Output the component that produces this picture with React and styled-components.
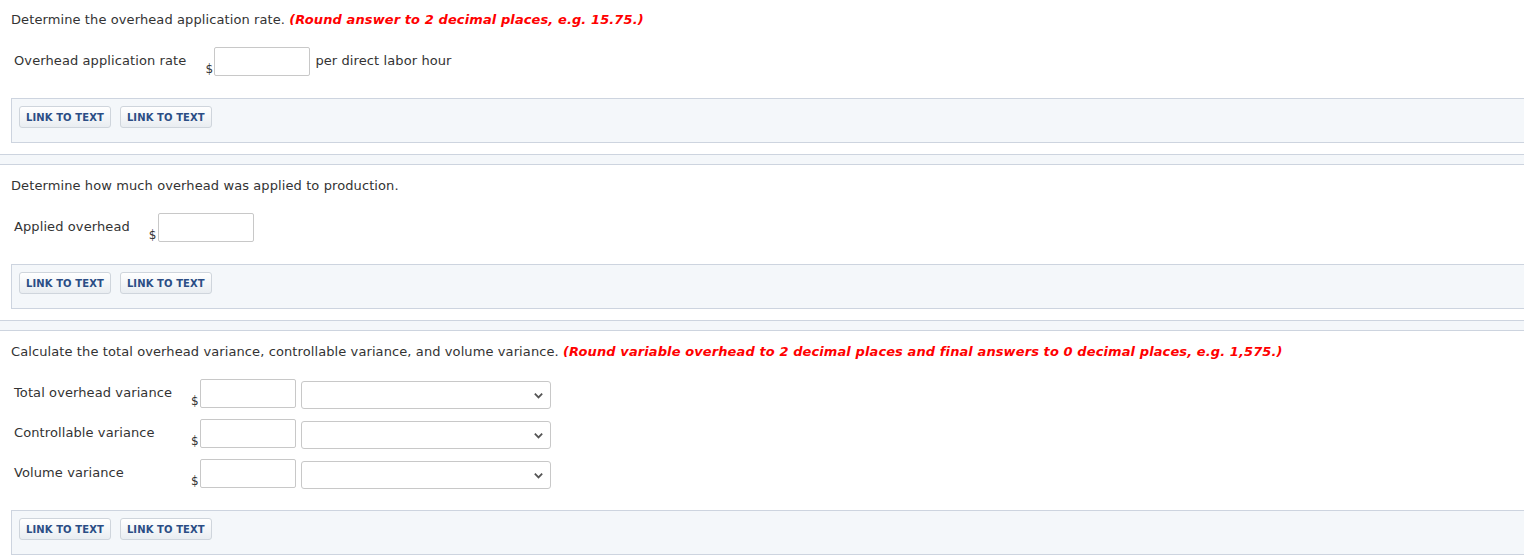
import React from "react"
import styled, { createGlobalStyle } from "styled-components"

const GlobalStyle = createGlobalStyle`
  body {
    margin: 0;
    background: #fff;
    font-family: "DejaVu Sans", Verdana, sans-serif;
    font-size: 13px;
    letter-spacing: 0.1px;
    color: #333;
    overflow: hidden;
  }
`

const Part = styled.section`
  padding: 12px 0 0 11px;
`

const Prompt = styled.p`
  margin: 0;
  line-height: 15px;
  .hint {
    color: #f00;
    font-weight: bold;
    font-style: italic;
  }
`

const Fields = styled.div`
  display: grid;
  grid-template-columns: auto auto auto 1fr;
  grid-auto-rows: 29px;
  row-gap: 11px;
  margin-top: 20px;
  align-items: start;
`

const Label = styled.div`
  padding: 6px 19px 0 3px;
  line-height: 16px;
  white-space: nowrap;
`

const Money = styled.div`
  display: flex;
  align-items: flex-end;
  span {
    font-size: 12px;
    line-height: 13px;
    margin-right: 1px;
    width: 8px;
  }
`

const Input = styled.input`
  box-sizing: border-box;
  width: 96px;
  height: 29px;
  margin: 0;
  border: 1px solid #c8c8c8;
  border-radius: 2px;
  background: #fff;
`

const After = styled.div`
  padding: 6px 0 0 5px;
  line-height: 16px;
`

const Select = styled.div`
  box-sizing: border-box;
  width: 250px;
  height: 28px;
  margin: 2px 0 0 5px;
  border: 1px solid #c8c8c8;
  border-radius: 3px;
  background: #fff;
  display: flex;
  align-items: center;
  justify-content: flex-end;
  padding-right: 6px;
  svg {
    width: 11px;
    height: 11px;
  }
`

const LinkBar = styled.div`
  margin-top: 22px;
  border: 1px solid #cdd4df;
  border-right: none;
  background: #f4f7fa;
  padding: 7px 7px 14px;
  display: flex;
  gap: 9px;
`

const LinkButton = styled.button`
  box-sizing: border-box;
  height: 22px;
  padding: 0 6px;
  border: 1px solid #cfd5dc;
  border-radius: 3px;
  background: linear-gradient(#ffffff, #e9edf1);
  color: #2b4d85;
  font-family: "DejaVu Sans", Verdana, sans-serif;
  font-size: 10px;
  font-weight: bold;
  letter-spacing: 0.1px;
  cursor: pointer;
`

const Divider = styled.div`
  margin: 11px 0 1px;
  height: 9px;
  border-top: 1px solid #cdd4df;
  border-bottom: 1px solid #cdd4df;
  background: #f4f7fa;
`

const Chevron = () => (
  <svg viewBox="0 0 12 12">
    <path d="M2 4 L6 8 L10 4" fill="none" stroke="#555" strokeWidth="2" />
  </svg>
)

const Links = () => (
  <LinkBar>
    <LinkButton>LINK TO TEXT</LinkButton>
    <LinkButton>LINK TO TEXT</LinkButton>
  </LinkBar>
)

const MoneyInput = () => (
  <Money>
    <span>$</span>
    <Input type="text" />
  </Money>
)

export default function App() {
  return (
    <>
      <GlobalStyle />
      <Part>
        <Prompt>
          Determine the overhead application rate.{" "}
          <span className="hint">(Round answer to 2 decimal places, e.g. 15.75.)</span>
        </Prompt>
        <Fields>
          <Label>Overhead application rate</Label>
          <MoneyInput />
          <After>per direct labor hour</After>
          <div />
        </Fields>
        <Links />
      </Part>
      <Divider />
      <Part>
        <Prompt>Determine how much overhead was applied to production.</Prompt>
        <Fields>
          <Label>Applied overhead</Label>
          <MoneyInput />
          <div />
          <div />
        </Fields>
        <Links />
      </Part>
      <Divider />
      <Part>
        <Prompt>
          Calculate the total overhead variance, controllable variance, and volume variance.{" "}
          <span className="hint">
            (Round variable overhead to 2 decimal places and final answers to 0 decimal places, e.g. 1,575.)
          </span>
        </Prompt>
        <Fields>
          {["Total overhead variance", "Controllable variance", "Volume variance"].map(name => (
            <React.Fragment key={name}>
              <Label>{name}</Label>
              <MoneyInput />
              <Select>
                <Chevron />
              </Select>
              <div />
            </React.Fragment>
          ))}
        </Fields>
        <Links />
      </Part>
    </>
  )
}
